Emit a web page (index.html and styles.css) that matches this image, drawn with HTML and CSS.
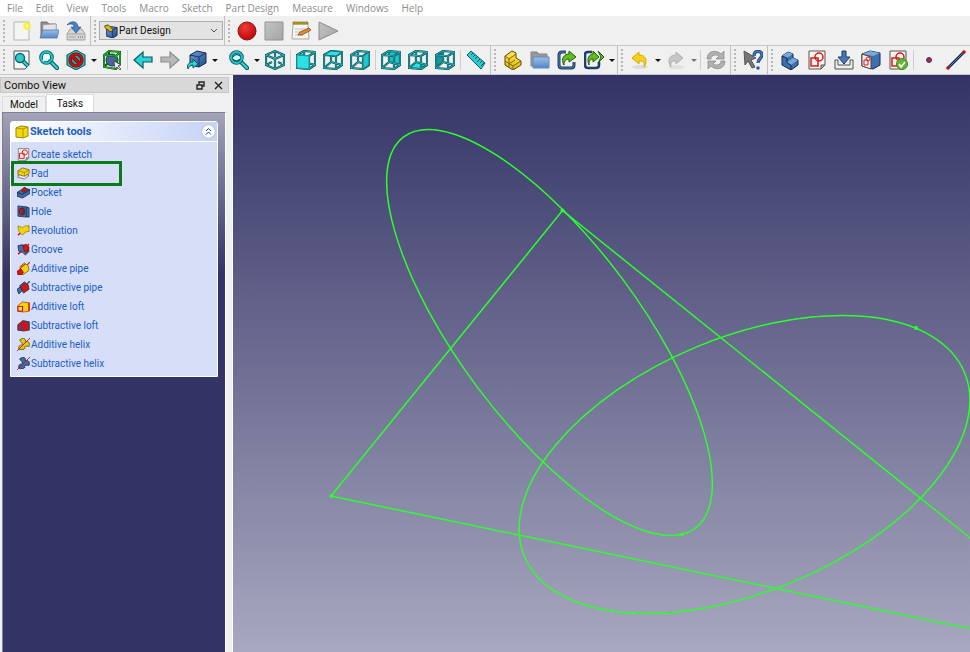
FILE: index.html
```html
<!DOCTYPE html>
<html lang="en">

<head>
    <meta charset="UTF-8">
    <meta name="viewport" content="width=device-width, initial-scale=1.0">
    <title>Part Design</title>
    <link rel="stylesheet" href="styles.css">
</head>

<body>
    <!-- Icon definitions -->
    <svg class="defs" aria-hidden="true">
        <defs>
            <linearGradient id="blue" x1="0" y1="0" x2="1" y2="1">
                <stop offset="0" stop-color="#6f9fd8" />
                <stop offset="1" stop-color="#204a87" />
            </linearGradient>
            <linearGradient id="folder" x1="0" y1="0" x2="0" y2="1">
                <stop offset="0" stop-color="#9dbfe8" />
                <stop offset="1" stop-color="#5686c4" />
            </linearGradient>
            <linearGradient id="grey" x1="0" y1="0" x2="1" y2="1">
                <stop offset="0" stop-color="#c4c4c4" />
                <stop offset="1" stop-color="#a4a4a4" />
            </linearGradient>
            <linearGradient id="gold" x1="0" y1="0" x2="0" y2="1">
                <stop offset="0" stop-color="#fce94f" />
                <stop offset="1" stop-color="#e0b80a" />
            </linearGradient>
            <radialGradient id="red" cx=".4" cy=".3" r=".8">
                <stop offset="0" stop-color="#f03a3a" />
                <stop offset="1" stop-color="#b80000" />
            </radialGradient>
            <radialGradient id="glow">
                <stop offset="0" stop-color="#ffffb0" />
                <stop offset=".5" stop-color="#f8ee3c" />
                <stop offset="1" stop-color="#f8ee3c" stop-opacity="0" />
            </radialGradient>

            <symbol id="new" viewBox="0 0 20 20">
                <path d="M2 1h15v18H2z" fill="#f4f4f2" stroke="#b4b4b0" />
                <circle cx="15" cy="5" r="5" fill="url(#glow)" />
            </symbol>
            <symbol id="open" viewBox="0 0 20 20">
                <path d="M2 1h6l2 2h7v12H2z" fill="#8c8c8c" stroke="#777" />
                <path d="M4 4l13-1v8H4z" fill="#e4e4e4" stroke="#aaa" stroke-width=".6" />
                <path d="M4 9h16l-2 8H1z" fill="url(#folder)" stroke="#4a78b4" stroke-width=".8" />
            </symbol>
            <symbol id="save" viewBox="0 0 20 20">
                <path d="M4 8h12l3 5v6H1v-6z" fill="#d4d6d4" stroke="#929492" stroke-width=".8" />
                <path d="M1 13h18M3 16h7" stroke="#a5a7a5" />
                <path d="M12 16h5" stroke="#999" stroke-width="2" stroke-dasharray="1 1" />
                <path d="M1 4C5-1 12 0 12 6h3l-5 6-5-6h3C8 3 5 2 1 4z" fill="#4a7fc1" stroke="#2c5a94" stroke-width=".7" />
            </symbol>
            <symbol id="record" viewBox="0 0 20 20">
                <circle cx="10" cy="10" r="9" fill="url(#red)" stroke="#8c1010" />
            </symbol>
            <symbol id="stop" viewBox="0 0 20 20">
                <path d="M1 1h18v18H1z" fill="url(#grey)" stroke="#929292" />
            </symbol>
            <symbol id="macros" viewBox="0 0 20 20">
                <path d="M2 3h15l1 15H1z" fill="#f4f4f0" stroke="#aaa89c" />
                <path d="M2 1h15v2H2z" fill="#b6a422" stroke="#7c7018" stroke-width=".7" />
                <path d="M4 8h11M4 11h7M4 14h8" stroke="#c0c0bc" />
                <path d="M7 14l2-3 9-4 2 2-9 5z" fill="#e88a2c" stroke="#6a3d12" stroke-width=".7" />
            </symbol>
            <symbol id="play" viewBox="0 0 20 20">
                <path d="M1 1l19 9-19 9z" fill="url(#grey)" stroke="#8c8c8c" />
            </symbol>
            <symbol id="workbench" viewBox="0 0 16 16">
                <path d="M3 6l5-3 7 1v9l-5 3-7-2z" fill="url(#blue)" stroke="#122a50" />
                <path d="M10 7l5-3M10 7v9M10 7L3 6" stroke="#173666" fill="none" />
                <path d="M1 2l4-1 5 5-1 3-3-1-5-4z" fill="#d8b81c" stroke="#4c400c" />
            </symbol>

            <symbol id="lens" viewBox="0 0 20 20">
                <path d="M11 11l7 7" stroke="#0b5a60" stroke-width="4.4" stroke-linecap="round" />
                <path d="M11 11l7 7" stroke="#2ed5da" stroke-width="2.2" stroke-linecap="round" />
                <circle cx="7.500" cy="7.500" r="5.500" fill="#bff" fill-opacity=".5" stroke="#0b5a60" stroke-width="3.600" />
                <circle cx="7.500" cy="7.500" r="5.500" fill="none" stroke="#22c4ca" stroke-width="2" />
            </symbol>
            <symbol id="fit-all" viewBox="0 0 20 20">
                <path d="M2 1h15v14l-4 4H2z" fill="#f6f6f6" stroke="#555" />
                <path d="M10 10l6 6" stroke="#0b5a60" stroke-width="4" />
                <path d="M10 10l6 6" stroke="#2ed5da" stroke-width="2" />
                <circle cx="8" cy="8" r="4.500" fill="#35c8cc" stroke="#0b6a70" stroke-width="1.400" />
            </symbol>
            <symbol id="fit-selection" viewBox="0 0 20 20">
                <use href="#lens" />
                <path d="M4 11l5-6M5 5h4v4" stroke="#fff" stroke-width="1.800" fill="none" />
            </symbol>
            <symbol id="sync-view" viewBox="0 0 20 20">
                <use href="#lens" />
                <path d="M4 7c1-3 5-3 7-1M11 9c-1 2-5 3-7 0" stroke="#0b5a60" stroke-width="1.300" fill="none" />
            </symbol>
            <symbol id="draw-style" viewBox="0 0 20 20">
                <path d="M10 0l9 5v10l-9 5-9-5V5z" fill="#20c0c6" stroke="#0b4a50" />
                <circle cx="10" cy="10" r="6" fill="#2a9a9e" stroke="#600" stroke-width="3.200" />
                <path d="M6 6l8 8" stroke="#600" stroke-width="3.200" />
                <circle cx="10" cy="10" r="6" fill="none" stroke="#d40c0c" stroke-width="2" />
                <path d="M6 6l8 8" stroke="#d40c0c" stroke-width="2" />
            </symbol>
            <symbol id="bounding-box" viewBox="0 0 20 20">
                <path d="M2 5l5-4 11 1v12l-4 5-12-2zM7 1v11l11 2M7 12l-5 5" fill="none" stroke="#0a5a10" stroke-width="2" />
                <circle cx="10" cy="10" r="6" fill="#4a64a0" stroke="#1c2c54" />
                <path d="M2 5l12 1 4-4M14 6v13" fill="none" stroke="#0a5a10" stroke-width="2" />
                <path d="M2 5l5-4 11 1v12l-4 5-12-2zM2 5l12 1 4-4M14 6v13" fill="none" stroke="#22b830" />
                <path d="M12 11l1 8 2-2 3 3 1-1-3-3 3-1z" fill="#eee" stroke="#333" stroke-width=".7" />
            </symbol>
            <symbol id="back" viewBox="0 0 20 20">
                <path d="M1 10l9-8v5h9v5h-9v6z" fill="#28d4d8" stroke="#0b5a60" stroke-width="1.200" />
            </symbol>
            <symbol id="forward" viewBox="0 0 20 20">
                <path d="M19 10l-9-8v5H1v5h9v6z" fill="#b8b8b8" stroke="#8e8e8e" stroke-width="1.200" />
            </symbol>
            <symbol id="go-linked" viewBox="0 0 20 20">
                <path d="M3 5l7-4 9 2v10l-7 4-9-2z" fill="url(#blue)" stroke="#122a50" />
                <path d="M3 5l9 2 7-4M12 7v10" stroke="#173666" fill="none" />
                <path d="M1 19c-2-5 2-7 5-7V9l5 5-5 4v-3c-3 0-4 2-5 4z" fill="#28d4d8" stroke="#0b5a60" />
            </symbol>

            <!-- Wire cube shared by the standard views -->
            <symbol id="cube" viewBox="0 0 20 20">
                <path d="M1 5l7-4 11 1v13l-6 4-12-1zM1 5l12 1 6-4M13 6v13M8 1v11l11 3M8 12l-7 6" fill="none" stroke="#0b4a50" stroke-width="2.200" stroke-linejoin="round" />
                <path d="M1 5l7-4 11 1v13l-6 4-12-1zM1 5l12 1 6-4M13 6v13M8 1v11l11 3M8 12l-7 6" fill="none" stroke="#25bfc4" stroke-width=".9" />
            </symbol>
            <symbol id="view-axo" viewBox="0 0 20 20">
                <path d="M10 1l9 4v10l-9 4-9-4V5zM1 5l9 4 9-4M10 9v10M10 1v6M1 15l6-3M19 15l-6-3" fill="none" stroke="#0b4a50" stroke-width="2.200" stroke-linejoin="round" />
                <path d="M10 1l9 4v10l-9 4-9-4V5zM1 5l9 4 9-4M10 9v10M10 1v6M1 15l6-3M19 15l-6-3" fill="none" stroke="#25bfc4" stroke-width=".9" />
            </symbol>
            <symbol id="view-front" viewBox="0 0 20 20">
                <use href="#cube" />
                <path d="M1 5l12 1v13l-12-1z" fill="#2ce0e4" stroke="#1397a0" />
            </symbol>
            <symbol id="view-top" viewBox="0 0 20 20">
                <use href="#cube" />
                <path d="M1 5l7-4 11 1-6 4z" fill="#2ce0e4" stroke="#0f7a82" />
            </symbol>
            <symbol id="view-right" viewBox="0 0 20 20">
                <use href="#cube" />
                <path d="M13 6l6-4v13l-6 4z" fill="#20c4ca" stroke="#0f7a82" />
            </symbol>
            <symbol id="view-rear" viewBox="0 0 20 20">
                <path d="M8 1l11 1v13L8 12z" fill="#20c4ca" />
                <use href="#cube" />
            </symbol>
            <symbol id="view-bottom" viewBox="0 0 20 20">
                <path d="M1 18l7-6 11 3-6 4z" fill="#2ce0e4" />
                <use href="#cube" />
            </symbol>
            <symbol id="view-left" viewBox="0 0 20 20">
                <path d="M1 5l7-4v11l-7 6z" fill="#159aa0" />
                <use href="#cube" />
            </symbol>
            <symbol id="measure" viewBox="0 0 20 20">
                <path d="M1 5l4-4 14 12-4 6z" fill="#28ccd2" stroke="#0b5a60" />
                <path d="M7 3L5 5M9 5L7 7M11 7l-2 2M14 9l-3 3M16 11l-2 2M18 13l-3 3" stroke="#0b5a60" />
            </symbol>

            <symbol id="part" viewBox="0 0 20 20">
                <path d="M2 6l7-5 4 2v5l5 3v4l-8 5-8-5z" fill="url(#gold)" stroke="#57480a" />
                <path d="M2 6l4 3 7-5M6 9v5l6-4M2 11l8 5 8-5M10 16v4M6 14v3" stroke="#7d680e" fill="none" />
            </symbol>
            <symbol id="group" viewBox="0 0 20 20">
                <path d="M1 2h6l2 2h8v12H1z" fill="#999" stroke="#828282" />
                <path d="M3 7h16v11H3z" fill="url(#folder)" stroke="#5c88c0" />
            </symbol>
            <symbol id="link" viewBox="0 0 20 20">
                <path d="M9 2H5Q2 2 2 5v10q0 3 3 3h9q3 0 3-3v-3" fill="none" stroke="#1f3f6b" stroke-width="3" />
                <path d="M9 2H5Q2 2 2 5v10q0 3 3 3h9q3 0 3-3v-3" fill="none" stroke="#4a78b0" />
                <path d="M7 15C3 8 8 4 12 4V1l7 6-7 5V9c-3 0-5 2-5 6z" fill="#5fc01c" stroke="#255a08" />
            </symbol>
            <symbol id="link-group" viewBox="0 0 20 20">
                <path d="M8 2H4Q1 2 1 5v10q0 3 3 3h8q3 0 3-3v-3" fill="none" stroke="#1f3f6b" stroke-width="2.600" />
                <path d="M5 15C2 8 6 4 9 4V1l6 6-6 5V9c-3 0-4 2-4 6z" fill="#5fc01c" stroke="#255a08" />
                <path d="M14 1l6 6-6 6 3-6z" fill="#5fc01c" stroke="#255a08" />
            </symbol>
            <symbol id="undo" viewBox="0 0 20 20">
                <ellipse cx="10" cy="17" rx="8" ry="2" fill="#ddd" />
                <path d="M2 8l7-6v3c7 0 9 6 5 12 1-5-1-6-5-6v3z" fill="#f4d21c" stroke="#d0aa10" />
            </symbol>
            <symbol id="redo" viewBox="0 0 20 20">
                <ellipse cx="10" cy="17" rx="8" ry="2" fill="#e0e0e0" />
                <path d="M17 8l-7-6v3C3 5 1 11 5 17c-1-5 1-6 5-6v3z" fill="#c6c6c6" stroke="#b0b0b0" />
            </symbol>
            <symbol id="refresh" viewBox="0 0 20 20">
                <path d="M1 9C1 1 10-1 15 4l3-3v8h-8l3-3C10 4 5 5 5 9zM19 11c0 8-9 10-14 5l-3 3v-8h8l-3 3c3 2 8 1 8-3z" fill="#b0b0b0" stroke="#8e8e8e" stroke-width=".8" />
            </symbol>
            <symbol id="whats-this" viewBox="0 0 20 20">
                <path d="M1 1l12 7-5 2 4 7-3 1-4-7-3 4z" fill="#777" stroke="#555" />
                <path d="M11 6c0-6 8-6 8-1 0 3-4 4-4 8" fill="none" stroke="#1d3e6c" stroke-width="3.200" />
                <path d="M11 6c0-6 8-6 8-1 0 3-4 4-4 8" fill="none" stroke="#4478b6" stroke-width="1.600" />
                <circle cx="15" cy="18" r="1.800" fill="#2f5c94" />
            </symbol>
            <symbol id="body" viewBox="0 0 20 20">
                <path d="M2 6l6-4 5 2v4l5 2v5l-7 5-9-5z" fill="#3d70ac" stroke="#14294a" />
                <path d="M2 6l6-4 5 2-6 4zM6 13l7-5 5 2-7 5z" fill="#7aa8dc" />
                <path d="M2 6l5 2v5l4 2v5" fill="none" stroke="#14294a" />
            </symbol>
            <symbol id="sketch" viewBox="0 0 20 20">
                <path d="M2 1h16v14l-4 4H2z" fill="#f8f4f2" stroke="#555" />
                <path d="M14 19v-4h4z" fill="#bbb" stroke="#555" />
                <path d="M4 8h7v8H4z" fill="none" stroke="#e01818" stroke-width="1.500" />
                <circle cx="12" cy="7" r="4" fill="none" stroke="#e01818" stroke-width="1.500" />
            </symbol>
            <symbol id="attach" viewBox="0 0 20 20">
                <path d="M4 10H1v9h18v-9h-3v5H4z" fill="#eee" stroke="#4c524c" />
                <path d="M8 1h4v6h4l-6 7-6-7h4z" fill="#4478b6" stroke="#1c3c68" />
            </symbol>
            <symbol id="sketch-3d" viewBox="0 0 20 20">
                <path d="M1 4l8-3 10 2v12l-7 4-11-3z" fill="#3d70ac" stroke="#14294a" />
                <path d="M1 4l8-3 10 2-7 3z" fill="#7aa8dc" />
                <path d="M1 4l9 3v12l-9-3z" fill="#f4f0f0" stroke="#444" />
                <path d="M3 10h4v5H3z" fill="none" stroke="#e01818" />
                <circle cx="7" cy="9" r="2" fill="none" stroke="#e01818" />
            </symbol>
            <symbol id="validate" viewBox="0 0 20 20">
                <use href="#sketch" />
                <circle cx="14" cy="14" r="5.500" fill="#62b534" stroke="#3c8a1c" />
                <path d="M11 14l2 3 4-5" fill="none" stroke="#fff" stroke-width="1.800" />
            </symbol>
            <symbol id="point" viewBox="0 0 20 20">
                <circle cx="10" cy="10" r="2.500" fill="#c81c2c" stroke="#274a80" />
            </symbol>
            <symbol id="line" viewBox="0 0 20 20">
                <path d="M2 18L18 2" stroke="#14294a" stroke-width="2.800" />
                <path d="M2 18L18 2" stroke="#4a80c0" />
                <circle cx="2" cy="18" r="1.800" fill="#d01010" />
                <circle cx="18" cy="2" r="1.800" fill="#d01010" />
            </symbol>

            <!-- Task panel icons -->
            <symbol id="yellow-cube" viewBox="0 0 14 14">
                <path d="M1 3l5-2 7 1v9l-5 2-7-1z" fill="#f2d80e" stroke="#9a860a" />
                <path d="M1 3l7 1 5-2M8 4v9" fill="none" stroke="#b09a0a" />
            </symbol>
            <symbol id="pad" viewBox="0 0 14 14">
                <path d="M1 9l6-2 6 2-5 4-7-2z" fill="#eee" stroke="#555" stroke-width=".8" />
                <path d="M1 4l5-3 7 2v4L8 10 1 8z" fill="#f2d40c" stroke="#6a5a08" stroke-width=".8" />
                <path d="M1 4l7 2 5-3M8 6v4" fill="none" stroke="#947e08" stroke-width=".8" />
            </symbol>
            <symbol id="pocket" viewBox="0 0 14 14">
                <path d="M0 7l8-5 6 2v4l-8 5-6-2z" fill="#3d6ca8" stroke="#14294a" stroke-width=".8" />
                <path d="M0 7l6 2 8-5" fill="none" stroke="#14294a" />
                <path d="M5 5l3-4 3 3-4 3z" fill="#d41414" stroke="#6c0808" stroke-width=".7" />
            </symbol>
            <symbol id="hole" viewBox="0 0 14 14">
                <path d="M1 1l9 1 3 1v10H10L1 12z" fill="#3f70ac" stroke="#14294a" stroke-width=".8" />
                <path d="M10 2v11" stroke="#14294a" stroke-width=".8" />
                <ellipse cx="5.500" cy="7" rx="3" ry="4" fill="#d41414" stroke="#300" stroke-width=".6" />
                <path d="M7 4c-2 1-2 5 0 6 2-1 2-5 0-6z" fill="#28406c" />
            </symbol>
            <symbol id="revolution" viewBox="0 0 14 14">
                <path d="M1 12L13 2" stroke="#d41414" stroke-width="1.500" />
                <path d="M1 2l5 2c2-2 4-3 7-1v5c-3 0-5 1-7 4L2 8z" fill="#f2d40c" stroke="#947e08" stroke-width=".8" />
            </symbol>
            <symbol id="groove" viewBox="0 0 14 14">
                <path d="M1 3l4-1 7 1 1 6-4 4-3-3-4-1z" fill="#3d6ca8" stroke="#14294a" stroke-width=".8" />
                <path d="M6 3l4-2 3 4-2 5-3-1z" fill="#d41414" stroke="#6c0808" stroke-width=".6" />
                <path d="M1 12l4-3M10 4l3-3" stroke="#d41414" stroke-width="1.400" />
            </symbol>
            <symbol id="additive-pipe" viewBox="0 0 14 14">
                <path d="M3 5l5-4 4 3 1 5-7 5z" fill="#f2d40c" stroke="#6a5a08" stroke-width=".8" />
                <path d="M0 10l4-3 3 4-2 3H1z" fill="#d41414" stroke="#6c0808" stroke-width=".6" />
                <path d="M4 6l5-4M11 3l3-3" stroke="#d41414" stroke-width="1.200" />
            </symbol>
            <symbol id="subtractive-pipe" viewBox="0 0 14 14">
                <path d="M0 9l4-3 2 4-4 4z" fill="#3d6ca8" stroke="#14294a" stroke-width=".8" />
                <path d="M3 5l5-4 4 3 1 5-6 4z" fill="#d41414" stroke="#14294a" stroke-width=".8" />
                <path d="M3 6l5-4M11 3l3-3" stroke="#2b4f80" stroke-width="1.600" />
            </symbol>
            <symbol id="additive-loft" viewBox="0 0 14 14">
                <path d="M1 6l5-4 7 1v9l-6 1-6-1z" fill="#f2d40c" stroke="#c03010" stroke-width=".8" />
                <path d="M1 7h5v5H1z" fill="#f6e65a" stroke="#d41414" stroke-width="1.300" />
                <path d="M13 3v9" stroke="#d41414" stroke-width="1.500" />
            </symbol>
            <symbol id="subtractive-loft" viewBox="0 0 14 14">
                <path d="M1 6l5-4 7 1v9l-6 1-6-1z" fill="#d41414" stroke="#7c1420" stroke-width=".8" />
                <path d="M1 7h5v5H1z" fill="#b02030" stroke="#2b4f80" />
                <path d="M13 3v9M6 2l7 1" stroke="#2b4f80" stroke-width="1.400" />
            </symbol>
            <symbol id="additive-helix" viewBox="0 0 14 14">
                <path d="M2 12c-1-5 3-4 4-5 0-3-3-3-3-5 4-3 7-1 6 2 4-1 5 2 4 5-3 0-4-1-5 1 2 2-2 3-6 2z" fill="#e8c80c" stroke="#5e500a" stroke-width=".9" />
                <path d="M0 14L14 0" stroke="#d41414" />
            </symbol>
            <symbol id="subtractive-helix" viewBox="0 0 14 14">
                <path d="M2 12c-1-5 3-4 4-5 0-3-3-3-3-5 4-3 7-1 6 2 4-1 5 2 4 5-3 0-4-1-5 1 2 2-2 3-6 2z" fill="#3d6ca8" stroke="#14294a" stroke-width=".9" />
                <path d="M0 14L14 0" stroke="#d41414" />
            </symbol>
        </defs>
    </svg>

    <nav class="menubar">
        <button>File</button>
        <button>Edit</button>
        <button>View</button>
        <button>Tools</button>
        <button>Macro</button>
        <button>Sketch</button>
        <button>Part Design</button>
        <button>Measure</button>
        <button>Windows</button>
        <button>Help</button>
    </nav>

    <div class="toolbar-row">
        <div class="toolbar">
            <button class="tool" aria-label="New"><svg><use href="#new" /></svg></button>
            <button class="tool" aria-label="Open"><svg><use href="#open" /></svg></button>
            <button class="tool" aria-label="Save"><svg><use href="#save" /></svg></button>
        </div>
        <div class="toolbar">
            <div class="workbench">
                <svg class="workbench-icon"><use href="#workbench" /></svg>
                <select aria-label="Workbench">
                    <option>Part Design</option>
                </select>
                <svg class="chevron" viewBox="0 0 8 5"><path d="M1 1l3 3 3-3" /></svg>
            </div>
        </div>
        <div class="toolbar last">
            <button class="tool" aria-label="Record macro"><svg><use href="#record" /></svg></button>
            <button class="tool" aria-label="Stop recording"><svg><use href="#stop" /></svg></button>
            <button class="tool" aria-label="Macros"><svg><use href="#macros" /></svg></button>
            <button class="tool" aria-label="Execute macro"><svg><use href="#play" /></svg></button>
        </div>
    </div>

    <div class="toolbar-row">
        <div class="toolbar">
            <button class="tool" aria-label="Fit all"><svg><use href="#fit-all" /></svg></button>
            <button class="tool" aria-label="Fit selection"><svg><use href="#fit-selection" /></svg></button>
            <button class="tool" aria-label="Draw style"><svg><use href="#draw-style" /></svg></button>
            <button class="drop" aria-label="Draw style menu"></button>
            <button class="tool" aria-label="Bounding box"><svg><use href="#bounding-box" /></svg></button>
            <span class="sep"></span>
            <button class="tool" aria-label="Back"><svg><use href="#back" /></svg></button>
            <button class="tool" aria-label="Forward"><svg><use href="#forward" /></svg></button>
            <button class="tool" aria-label="Go to linked object"><svg><use href="#go-linked" /></svg></button>
            <button class="drop" aria-label="Linked object menu"></button>
            <span class="space"></span>
            <button class="tool" aria-label="Sync view"><svg><use href="#sync-view" /></svg></button>
            <button class="drop" aria-label="Sync view menu"></button>
            <button class="tool" aria-label="Axonometric"><svg><use href="#view-axo" /></svg></button>
            <span class="sep"></span>
            <button class="tool" aria-label="Front"><svg><use href="#view-front" /></svg></button>
            <button class="tool" aria-label="Top"><svg><use href="#view-top" /></svg></button>
            <button class="tool" aria-label="Right"><svg><use href="#view-right" /></svg></button>
            <span class="sep"></span>
            <button class="tool" aria-label="Rear"><svg><use href="#view-rear" /></svg></button>
            <button class="tool" aria-label="Bottom"><svg><use href="#view-bottom" /></svg></button>
            <button class="tool" aria-label="Left"><svg><use href="#view-left" /></svg></button>
            <span class="sep"></span>
            <button class="tool" aria-label="Measure distance"><svg><use href="#measure" /></svg></button>
        </div>
        <div class="toolbar">
            <button class="tool" aria-label="Create part"><svg><use href="#part" /></svg></button>
            <button class="tool" aria-label="Create group"><svg><use href="#group" /></svg></button>
            <button class="tool" aria-label="Make link"><svg><use href="#link" /></svg></button>
            <button class="tool" aria-label="Link actions"><svg><use href="#link-group" /></svg></button>
            <button class="drop" aria-label="Link actions menu"></button>
        </div>
        <div class="toolbar">
            <button class="tool" aria-label="Undo"><svg><use href="#undo" /></svg></button>
            <button class="drop" aria-label="Undo history"></button>
            <button class="tool" aria-label="Redo"><svg><use href="#redo" /></svg></button>
            <button class="drop disabled" aria-label="Redo history"></button>
            <span class="sep"></span>
            <button class="tool" aria-label="Refresh"><svg><use href="#refresh" /></svg></button>
        </div>
        <div class="toolbar">
            <button class="tool" aria-label="What's this?"><svg><use href="#whats-this" /></svg></button>
        </div>
        <div class="toolbar last">
            <button class="tool" aria-label="Create body"><svg><use href="#body" /></svg></button>
            <button class="tool" aria-label="Create sketch"><svg><use href="#sketch" /></svg></button>
            <button class="tool" aria-label="Attach sketch"><svg><use href="#attach" /></svg></button>
            <button class="tool" aria-label="Map sketch to face"><svg><use href="#sketch-3d" /></svg></button>
            <button class="tool" aria-label="Validate sketch"><svg><use href="#validate" /></svg></button>
            <span class="sep"></span>
            <button class="tool" aria-label="Datum point"><svg><use href="#point" /></svg></button>
            <button class="tool" aria-label="Datum line"><svg><use href="#line" /></svg></button>
        </div>
    </div>

    <main class="workspace">
        <aside class="combo-view">
            <header class="dock-title">
                <h1>Combo View</h1>
                <button aria-label="Float">
                    <svg viewBox="0 0 9 9"><path d="M3 3V1h5v4H6M1 4h5v4H1zM1 4h5M3 1h5" /></svg>
                </button>
                <button aria-label="Close">
                    <svg viewBox="0 0 9 9"><path d="M1 1l7 7M8 1L1 8" /></svg>
                </button>
            </header>
            <div class="tabs">
                <button>Model</button>
                <button class="active">Tasks</button>
            </div>
            <div class="task-panel">
                <section class="task-box">
                    <header class="task-header">
                        <svg><use href="#yellow-cube" /></svg>
                        <h2>Sketch tools</h2>
                        <button aria-label="Collapse">
                            <svg viewBox="0 0 13 13"><path d="M4 6l2.500-2.500L9 6M4 9.500L6.500 7 9 9.500" /></svg>
                        </button>
                    </header>
                    <ul class="task-list">
                        <li><a href="#"><svg viewBox="0 0 20 20"><use href="#sketch" /></svg>Create sketch</a></li>
                        <li class="marked"><a href="#"><svg><use href="#pad" /></svg>Pad</a></li>
                        <li><a href="#"><svg><use href="#pocket" /></svg>Pocket</a></li>
                        <li><a href="#"><svg><use href="#hole" /></svg>Hole</a></li>
                        <li><a href="#"><svg><use href="#revolution" /></svg>Revolution</a></li>
                        <li><a href="#"><svg><use href="#groove" /></svg>Groove</a></li>
                        <li><a href="#"><svg><use href="#additive-pipe" /></svg>Additive pipe</a></li>
                        <li><a href="#"><svg><use href="#subtractive-pipe" /></svg>Subtractive pipe</a></li>
                        <li><a href="#"><svg><use href="#additive-loft" /></svg>Additive loft</a></li>
                        <li><a href="#"><svg><use href="#subtractive-loft" /></svg>Subtractive loft</a></li>
                        <li><a href="#"><svg><use href="#additive-helix" /></svg>Additive helix</a></li>
                        <li><a href="#"><svg><use href="#subtractive-helix" /></svg>Subtractive helix</a></li>
                    </ul>
                </section>
            </div>
        </aside>

        <div class="viewer">
            <svg viewBox="233 75 737 577" preserveAspectRatio="xMinYMin slice">
                <g class="edges">
                    <ellipse cx="549.500" cy="332.500" rx="244" ry="90.500" transform="rotate(53.300 549.500 332.500)" />
                    <ellipse cx="744.500" cy="464.500" rx="238.500" ry="127" transform="rotate(-22.700 744.500 464.500)" />
                    <path d="M1000 562L562.500 210.500 331 496l669 139" />
                </g>
                <g class="vertices">
                    <circle cx="562.500" cy="210.500" r="2" />
                    <circle cx="331.500" cy="496" r="2" />
                    <circle cx="682" cy="534.500" r="2" />
                    <circle cx="916" cy="328" r="2" />
                </g>
            </svg>
        </div>
    </main>
</body>

</html>
```
FILE: styles.css
```css
* {
    box-sizing: border-box;
}

body {
    margin: 0;
    height: 100vh;
    display: flex;
    flex-direction: column;
    overflow: hidden;
    background-color: #f0f0f0;
    font-family: Roboto, "Noto Sans", sans-serif;
    font-size: 10px;
    color: #111;
}

button {
    border: none;
    padding: 0;
    background: none;
    font: inherit;
    color: inherit;
}

h1,
h2 {
    margin: 0;
    font-size: inherit;
}

.defs {
    position: absolute;
    width: 0;
    height: 0;
}

/* Menu */
.menubar {
    display: flex;
    gap: 1px;
    height: 16px;
    padding-left: 1px;
    background-color: #fff;
    color: #8c8c8c;
    font-family: "Open Sans", "Noto Sans", sans-serif;
}

.menubar button {
    padding: 0 6px;
    line-height: 15px;
}

/* Toolbars */
.toolbar-row {
    display: flex;
    flex: none;
    height: 29px;
    border-bottom: 1px solid #c6c6c6;
}

.menubar + .toolbar-row {
    height: 30px;
}

.toolbar {
    display: flex;
    flex: none;
    align-items: center;
    padding-right: 1px;
    border-right: 1px solid #c0c0c0;
}

.toolbar.last {
    border-right: none;
}

.toolbar::before {
    content: "";
    width: 2px;
    height: 22px;
    margin: 0 3px;
    background: repeating-linear-gradient(#b8b8b8 0 2px, #f0f0f0 2px 4px);
}

.tool {
    display: flex;
    justify-content: center;
    width: 27px;
}

.tool svg {
    width: 20px;
    height: 20px;
}

.drop {
    width: 9px;
    height: 20px;
    display: flex;
    align-items: center;
    justify-content: center;
}

.drop::before {
    content: "";
    border: 3px solid transparent;
    border-top-color: #111;
    border-bottom: none;
}

.drop.disabled::before {
    border-top-color: #777;
}

.sep {
    width: 4px;
    height: 20px;
    background: linear-gradient(#cdcdcd, #cdcdcd) center / 1px 100% no-repeat;
}

.space {
    width: 6px;
}

.workbench {
    display: flex;
    align-items: center;
    width: 124px;
    height: 19px;
    padding: 0 4px;
    background-color: #e3e3e3;
    border: 1px solid #adadad;
}

.workbench-icon {
    width: 14px;
    height: 14px;
}

.workbench select {
    flex: 1;
    min-width: 0;
    padding: 0 1px;
    border: none;
    appearance: none;
    background: none;
    font: inherit;
    color: inherit;
}

.chevron {
    width: 8px;
    height: 5px;
    fill: none;
    stroke: #555;
}

/* Workspace */
.workspace {
    display: flex;
    flex: 1;
    min-height: 0;
}

.combo-view {
    display: flex;
    flex-direction: column;
    width: 233px;
    padding: 2px 6px 0 2px;
    border-right: 1px solid #fff;
}

.dock-title {
    display: flex;
    align-items: center;
    gap: 9px;
    height: 16px;
    margin: 0 -3px 0 -2px;
    padding: 0 5px 0 3px;
    background-color: #d8d8d8;
    border: 1px solid #c8c8c8;
}

.dock-title h1 {
    flex: 1;
    font-size: 11px;
    font-weight: normal;
}

.dock-title button {
    display: flex;
}

.dock-title svg {
    width: 9px;
    height: 9px;
    fill: none;
    stroke: #222;
    stroke-width: 1.4;
}

.tabs {
    display: flex;
    align-items: flex-end;
    height: 19px;
}

.tabs button {
    height: 16px;
    padding: 0 7px;
    border: 1px solid #dcdcdc;
    border-bottom: none;
}

.tabs .active {
    height: 18px;
    padding: 0 10px;
    background-color: #fff;
}

.task-panel {
    flex: 1;
    padding: 8px 7px;
    border: 1px solid #808090;
    border-right-color: #fff;
    border-bottom: none;
    background: linear-gradient(#a2a2b8, #333366 160px);
}

.task-box {
    border: 1px solid #fff;
    border-radius: 3px 3px 0 0;
    background-color: #d6dff7;
    color: #215dc6;
}

.task-header {
    display: flex;
    align-items: center;
    gap: 1px;
    height: 20px;
    padding: 0 2px 0 4px;
    border-bottom: 1px solid #fff;
    background: linear-gradient(90deg, #fff, #c6d3f7);
}

.task-header svg {
    width: 14px;
    height: 14px;
}

.task-header h2 {
    flex: 1;
    font-size: 11px;
    font-weight: bold;
}

.task-header button {
    display: flex;
    border-radius: 50%;
    background-color: #fff;
    box-shadow: 0 0 1px #777;
}

.task-header button svg {
    width: 13px;
    height: 13px;
    fill: none;
    stroke: #1c3c9c;
}

.task-list {
    margin: 0;
    padding: 3px 6px;
    list-style: none;
}

.task-list a {
    display: flex;
    align-items: center;
    gap: 1px;
    height: 19px;
    color: inherit;
    text-decoration: none;
}

.task-list svg {
    width: 13px;
    height: 13px;
}

/* Highlight frame drawn round the item */
.marked {
    position: relative;
}

.marked::after {
    content: "";
    position: absolute;
    inset: -3px auto -3px -6px;
    width: 105px;
    border: 3px solid #0a7a1c;
}

.viewer {
    flex: 1;
    min-width: 0;
    background: linear-gradient(#333366, #a8a8c0);
}

.viewer svg {
    display: block;
    width: 100%;
    height: 100%;
}

.edges {
    fill: none;
    stroke: #2cff2c;
    stroke-width: 1.5;
}

.vertices {
    fill: #2cff2c;
}
```
